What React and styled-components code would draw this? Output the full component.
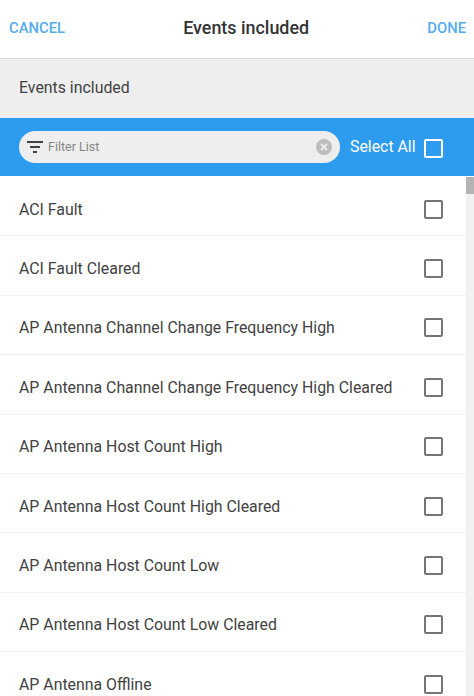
import React from "react";
import styled, { createGlobalStyle } from "styled-components";

const Global = createGlobalStyle`
  html, body {
    margin: 0;
    padding: 0;
    background: #fff;
    overflow: hidden;
  }
  * {
    box-sizing: border-box;
  }
`;

const Page = styled.div`
  width: 474px;
  height: 696px;
  display: flex;
  flex-direction: column;
  overflow: hidden;
  font-family: Roboto, sans-serif;
  color: #424242;
`;

const Header = styled.header`
  height: 59px;
  flex: none;
  display: flex;
  align-items: center;
  justify-content: space-between;
  padding: 0 8px 3px 9px;
  background: #fff;
  border-bottom: 1px solid #d9d9d9;
`;

const HeaderAction = styled.button`
  border: 0;
  padding: 0;
  background: none;
  font: 500 14.8px Roboto, sans-serif;
  color: #55acee;
`;

const Title = styled.h1`
  margin: 0;
  font-size: 17.9px;
  font-weight: 500;
  color: #333;
`;

const Section = styled.div`
  height: 59px;
  flex: none;
  display: flex;
  align-items: center;
  padding: 0 19px 2px;
  background: #eee;
  font-size: 15.87px;
`;

const FilterBar = styled.div`
  height: 58px;
  flex: none;
  display: flex;
  align-items: center;
  padding: 0 0 0 19px;
  background: #2d9cef;
`;

const Search = styled.div`
  width: 321px;
  height: 32px;
  flex: none;
  display: flex;
  align-items: center;
  padding: 0 8px 0 8px;
  border-radius: 16px;
  background: #eee;
`;

const Placeholder = styled.span`
  flex: 1;
  margin-left: 5px;
  padding-bottom: 1px;
  font-size: 12.5px;
  color: #858585;
`;

const SelectAll = styled.span`
  margin-left: 10px;
  margin-right: 8px;
  padding-bottom: 2px;
  font-size: 15.87px;
  color: #fff;
  white-space: nowrap;
`;

const Box = styled.span`
  width: 19px;
  height: 19px;
  flex: none;
  border: 2px solid ${(p) => (p.$light ? "#fff" : "#757575")};
  border-radius: 2px;
  position: relative;
  top: ${(p) => (p.$light ? "1px" : "0")};
`;

const Body = styled.div`
  flex: 1;
  min-height: 0;
  display: flex;
  margin-top: 1px;
`;

const List = styled.ul`
  flex: 1;
  margin: 0;
  padding: 0;
  list-style: none;
`;

const Row = styled.li`
  height: 59.4px;
  display: flex;
  align-items: center;
  justify-content: space-between;
  padding: 6px 23px 0 19px;
  border-bottom: 1px solid #f0f0f0;
  font-size: 15.87px;
`;

const Track = styled.div`
  width: 8px;
  flex: none;
  background: #f1f1f1;
`;

const Thumb = styled.div`
  height: 17px;
  background: #b4b4b4;
`;

const events = [
  "ACI Fault",
  "ACI Fault Cleared",
  "AP Antenna Channel Change Frequency High",
  "AP Antenna Channel Change Frequency High Cleared",
  "AP Antenna Host Count High",
  "AP Antenna Host Count High Cleared",
  "AP Antenna Host Count Low",
  "AP Antenna Host Count Low Cleared",
  "AP Antenna Offline",
];

const FilterIcon = () => (
  <svg width="16" height="12" viewBox="0 0 16 12">
    <path d="M0 1h16M3 6h10M6 11h4" stroke="#424242" strokeWidth="1.8" fill="none" />
  </svg>
);

const ClearIcon = () => (
  <svg width="16" height="16" viewBox="0 0 16 16">
    <circle cx="8" cy="8" r="8" fill="#bdbdbd" />
    <path d="M5 5l6 6M11 5l-6 6" stroke="#eee" strokeWidth="1.8" />
  </svg>
);

const App = () => (
  <Page>
    <Global />
    <Header>
      <HeaderAction>CANCEL</HeaderAction>
      <Title>Events included</Title>
      <HeaderAction>DONE</HeaderAction>
    </Header>
    <Section>Events included</Section>
    <FilterBar>
      <Search>
        <FilterIcon />
        <Placeholder>Filter List</Placeholder>
        <ClearIcon />
      </Search>
      <SelectAll>Select All</SelectAll>
      <Box $light />
    </FilterBar>
    <Body>
      <List>
        {events.map((name) => (
          <Row key={name}>
            {name}
            <Box />
          </Row>
        ))}
      </List>
      <Track>
        <Thumb />
      </Track>
    </Body>
  </Page>
);

export default App;
